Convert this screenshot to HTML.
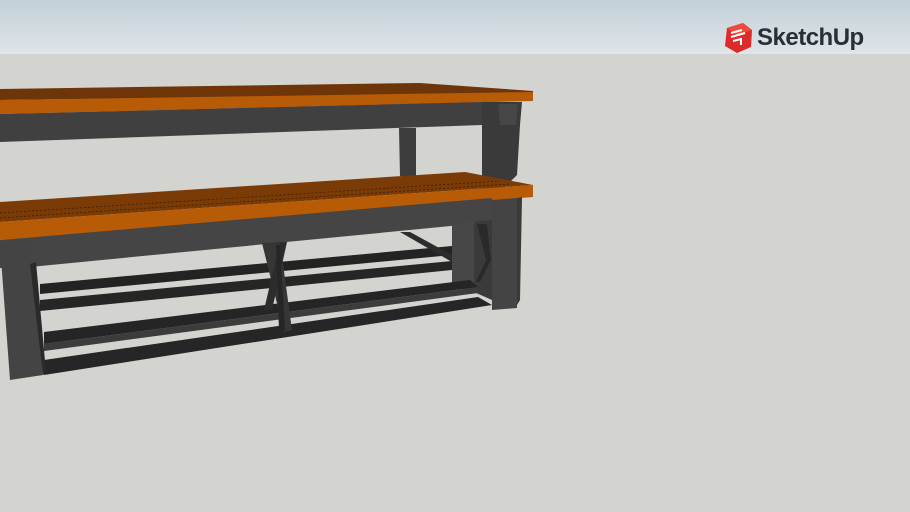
<!DOCTYPE html>
<html><head><style>
html,body{margin:0;padding:0;width:910px;height:512px;overflow:hidden;background:#d3d3cf}
.sky{position:absolute;left:0;top:0;width:910px;height:54px;background:linear-gradient(#c3d0d8,#dfe5e8)}
svg{position:absolute;left:0;top:0}
.logo{position:absolute;left:757px;top:24px;font:bold 24px "Liberation Sans",sans-serif;color:#2a2e36;letter-spacing:-0.5px}
</style></head><body>
<div class="sky"></div>
<svg width="910" height="512" viewBox="0 0 910 512">
<!-- table -->
<polygon points="0,89 420,83 533,91 533,93 0,100" fill="#6e3608"/>
<polygon points="0,100 533,92 533,101 0,114" fill="#b85b06"/>
<polygon points="0,114 482,102 482,125 0,142" fill="#404040"/>
<polygon points="482,102 522,102 520,125 517,175 502,190 482,190" fill="#3a3a3a"/>
<polygon points="498,104 518,104 516,125 500,125" fill="#464646"/>
<polygon points="399,128 416,128 416,176 400,176" fill="#3c3c3c"/>
<!-- bench top -->
<polygon points="0,202 465,172 533,185 0,222" fill="#7a3b06"/>
<polyline points="0,213 500,181" stroke="#3a1a02" stroke-width="0.7" stroke-dasharray="2,2" fill="none"/>
<polyline points="0,218 510,184" stroke="#3a1a02" stroke-width="0.7" stroke-dasharray="2,2" fill="none"/>
<polygon points="0,222 533,185 533,197 0,240" fill="#b85b06"/>
<!-- back rails -->
<polygon points="40,284 452,246 452,255 40,294" fill="#232323"/>
<polygon points="40,300 452,261 452,270 40,311" fill="#262626"/>
<polygon points="400,232 410,232 452,255 452,262" fill="#2c2c2c"/>
<!-- apron -->
<polygon points="0,240 492,198 492,222 30,267 0,268" fill="#454545"/>
<!-- inner right leg and X -->
<polygon points="452,224 474,222 474,290 452,288" fill="#474747"/>
<polygon points="474,222 492,220 492,300 474,292" fill="#3a3a3a"/>
<polygon points="477,224 487,224 491,260 480,282 476,282 486,260" fill="#2a2a2a"/>
<!-- front rails -->
<polygon points="44,332 470,280 478,287 44,344" fill="#252525"/>
<polygon points="44,344 478,287 478,293 44,351" fill="#3c3c3c"/>
<polygon points="44,360 478,297 492,305 44,375" fill="#262626"/>
<!-- middle X -->
<polygon points="262,243 280,242 292,330 284,332" fill="#363636"/>
<polygon points="280,242 287,242 272,310 264,310" fill="#2c2c2c"/>
<polygon points="276,245 280,245 285,330 279,330" fill="#262626"/>
<!-- left leg -->
<polygon points="0,245 30,242 43,375 10,380" fill="#444"/>
<polygon points="30,264 36,262 46,372 43,375" fill="#2a2a2a"/>
<!-- right leg -->
<polygon points="492,200 517,198 517,308 492,310" fill="#444"/>
<polygon points="517,198 522,197 520,300 517,305" fill="#393939"/>
</svg>
<svg width="910" height="512" viewBox="0 0 910 512">
<polygon points="727,28 743,23 752,30 751,47 737,53 725,46" fill="#dd2a2a"/>
<polygon points="727,28 743,23 752,30 737,35" fill="#ef4a3a"/>
<path d="M731,33 L742,30 M731,37 L745,33 M733,41 L741,39 L741,45" stroke="#fff" stroke-width="2" fill="none"/>
</svg>
<div class="logo">SketchUp</div>
</body></html>
